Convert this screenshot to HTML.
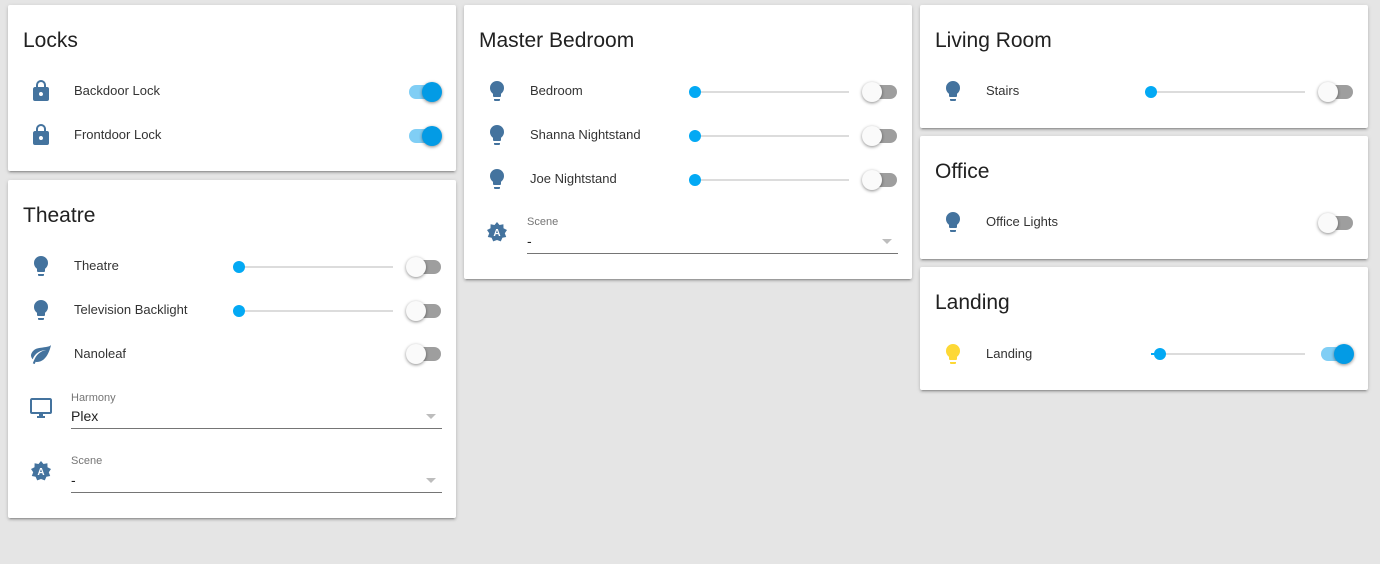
<!DOCTYPE html>
<html><head><meta charset="utf-8"><style>
body{margin:0;width:1380px;height:564px;background:#e5e5e5;font-family:"Liberation Sans",sans-serif;position:relative;overflow:hidden}
.card{position:absolute;background:#fff;border-radius:2px;box-shadow:0 2px 2px rgba(0,0,0,.14),0 1px 5px rgba(0,0,0,.12),0 3px 1px -2px rgba(0,0,0,.2)}
.t{position:absolute;font-size:21px;color:#212121;line-height:24px}
.l{position:absolute;font-size:13px;color:#333;line-height:16px}
.ic{position:absolute;width:24px;height:24px;fill:#44739e}
.sl{position:absolute;height:2px;background:#dcdcdc;width:154px}
.sl i{position:absolute;left:-6px;top:-5px;width:12px;height:12px;border-radius:50%;background:#03a9f4}
.tg{position:absolute;width:32px;height:14px;border-radius:7px;background:#9e9e9e}
.tg i{position:absolute;top:-3px;left:-3px;width:20px;height:20px;border-radius:50%;background:#fafafa;box-shadow:0 1px 3px rgba(0,0,0,.45)}
.tg.on{background:#80cef5}.tg.on i{left:13px;background:#039be5}
.dl{position:absolute;font-size:11px;color:#757575;line-height:13px}
.dv{position:absolute;font-size:14px;color:#212121;line-height:16px}
.ul{position:absolute;height:1px;background:#757575;width:371px}
.ar{position:absolute;width:0;height:0;border-left:5px solid transparent;border-right:5px solid transparent;border-top:5px solid #bdbdbd}
</style></head><body>
<svg width="0" height="0" style="position:absolute">
<defs>
<symbol id="bulb" viewBox="0 0 24 24"><path d="M12,2A7,7 0 0,0 5,9C5,11.38 6.19,13.47 8,14.74V17A1,1 0 0,0 9,18H15A1,1 0 0,0 16,17V14.74C17.81,13.47 19,11.38 19,9A7,7 0 0,0 12,2M9,21A1,1 0 0,0 10,22H14A1,1 0 0,0 15,21V20H9V21Z"/></symbol>
<symbol id="lock" viewBox="0 0 24 24"><path d="M12,17A2,2 0 0,0 14,15C14,13.89 13.1,13 12,13A2,2 0 0,0 10,15A2,2 0 0,0 12,17M18,8A2,2 0 0,1 20,10V20A2,2 0 0,1 18,22H6A2,2 0 0,1 4,20V10C4,8.89 4.9,8 6,8H7V6A5,5 0 0,1 12,1A5,5 0 0,1 17,6V8H18M12,3A3,3 0 0,0 9,6V8H15V6A3,3 0 0,0 12,3Z"/></symbol>
<symbol id="leaf" viewBox="0 0 24 24"><path d="M17,8C8,10 5.9,16.170 3.82,21.34L5.71,22L6.66,19.7C7.14,19.87 7.64,20 8,20C19,20 22,3 22,3C21,5 14,5.25 9,6.25C4,7.25 2,11.5 2,13.5C2,15.5 3.75,17.25 3.75,17.25C7,8 17,8 17,8Z"/></symbol>
<symbol id="mon" viewBox="0 0 24 24"><path d="M21,16H3V4H21M21,2H3C1.89,2 1,2.89 1,4V16A2,2 0 0,0 3,18H10V20H8V22H16V20H14V18H21A2,2 0 0,0 23,16V4C23,2.89 22.1,2 21,2Z"/></symbol>
<symbol id="scene" viewBox="0 0 24 24"><polygon points="12,2 14.5,5 18.4,4.3 18.5,8.2 22,10 19.8,13.3 21.2,17 17.4,17.8 15.8,21.4 12,20 8.2,21.4 6.6,17.8 2.8,17 4.2,13.3 2,10 5.5,8.2 5.6,4.3 9.5,5"/><text x="12" y="16" text-anchor="middle" font-size="10" font-weight="bold" fill="#fff" font-family="Liberation Sans">A</text></symbol>
</defs></svg>

<!-- Locks -->
<div class="card" style="left:8px;top:5px;width:448px;height:166px"></div>
<div class="t" style="left:23px;top:29px">Locks</div>
<svg class="ic" style="left:29px;top:79px"><use href="#lock"/></svg>
<div class="l" style="left:74px;top:83px">Backdoor Lock</div>
<div class="tg on" style="left:409px;top:85px"><i></i></div>
<svg class="ic" style="left:29px;top:123px"><use href="#lock"/></svg>
<div class="l" style="left:74px;top:127px">Frontdoor Lock</div>
<div class="tg on" style="left:409px;top:129px"><i></i></div>

<!-- Theatre -->
<div class="card" style="left:8px;top:180px;width:448px;height:338px"></div>
<div class="t" style="left:23px;top:204px">Theatre</div>
<svg class="ic" style="left:29px;top:254px"><use href="#bulb"/></svg>
<div class="l" style="left:74px;top:258px">Theatre</div>
<div class="sl" style="left:239px;top:266px"><i></i></div>
<div class="tg" style="left:409px;top:260px"><i></i></div>
<svg class="ic" style="left:29px;top:298px"><use href="#bulb"/></svg>
<div class="l" style="left:74px;top:302px">Television Backlight</div>
<div class="sl" style="left:239px;top:310px"><i></i></div>
<div class="tg" style="left:409px;top:304px"><i></i></div>
<svg class="ic" style="left:29px;top:342px"><use href="#leaf"/></svg>
<div class="l" style="left:74px;top:346px">Nanoleaf</div>
<div class="tg" style="left:409px;top:347px"><i></i></div>
<svg class="ic" style="left:29px;top:396px"><use href="#mon"/></svg>
<div class="dl" style="left:71px;top:392px">Harmony</div>
<div class="dv" style="left:71px;top:408px">Plex</div>
<div class="ar" style="left:426px;top:414px"></div>
<div class="ul" style="left:71px;top:428px"></div>
<svg class="ic" style="left:29px;top:459px"><use href="#scene"/></svg>
<div class="dl" style="left:71px;top:455px">Scene</div>
<div class="dv" style="left:71px;top:472px">-</div>
<div class="ar" style="left:426px;top:478px"></div>
<div class="ul" style="left:71px;top:492px"></div>

<!-- Master Bedroom -->
<div class="card" style="left:464px;top:5px;width:448px;height:274px"></div>
<div class="t" style="left:479px;top:29px">Master Bedroom</div>
<svg class="ic" style="left:485px;top:79px"><use href="#bulb"/></svg>
<div class="l" style="left:530px;top:83px">Bedroom</div>
<div class="sl" style="left:695px;top:91px"><i></i></div>
<div class="tg" style="left:865px;top:85px"><i></i></div>
<svg class="ic" style="left:485px;top:123px"><use href="#bulb"/></svg>
<div class="l" style="left:530px;top:127px">Shanna Nightstand</div>
<div class="sl" style="left:695px;top:135px"><i></i></div>
<div class="tg" style="left:865px;top:129px"><i></i></div>
<svg class="ic" style="left:485px;top:167px"><use href="#bulb"/></svg>
<div class="l" style="left:530px;top:171px">Joe Nightstand</div>
<div class="sl" style="left:695px;top:179px"><i></i></div>
<div class="tg" style="left:865px;top:173px"><i></i></div>
<svg class="ic" style="left:485px;top:220px"><use href="#scene"/></svg>
<div class="dl" style="left:527px;top:216px">Scene</div>
<div class="dv" style="left:527px;top:233px">-</div>
<div class="ar" style="left:882px;top:239px"></div>
<div class="ul" style="left:527px;top:253px"></div>

<!-- Living Room -->
<div class="card" style="left:920px;top:5px;width:448px;height:123px"></div>
<div class="t" style="left:935px;top:29px">Living Room</div>
<svg class="ic" style="left:941px;top:79px"><use href="#bulb"/></svg>
<div class="l" style="left:986px;top:83px">Stairs</div>
<div class="sl" style="left:1151px;top:91px"><i></i></div>
<div class="tg" style="left:1321px;top:85px"><i></i></div>

<!-- Office -->
<div class="card" style="left:920px;top:136px;width:448px;height:123px"></div>
<div class="t" style="left:935px;top:160px">Office</div>
<svg class="ic" style="left:941px;top:210px"><use href="#bulb"/></svg>
<div class="l" style="left:986px;top:214px">Office Lights</div>
<div class="tg" style="left:1321px;top:216px"><i></i></div>

<!-- Landing -->
<div class="card" style="left:920px;top:267px;width:448px;height:123px"></div>
<div class="t" style="left:935px;top:291px">Landing</div>
<svg class="ic" style="left:941px;top:342px;fill:#fdd835"><use href="#bulb"/></svg>
<div class="l" style="left:986px;top:346px">Landing</div>
<div class="sl" style="left:1151px;top:353px"><i style="left:3px;"></i><b style="position:absolute;left:0;top:0;width:6px;height:2px;background:#03a9f4"></b></div>
<div class="tg on" style="left:1321px;top:347px"><i></i></div>
</body></html>
